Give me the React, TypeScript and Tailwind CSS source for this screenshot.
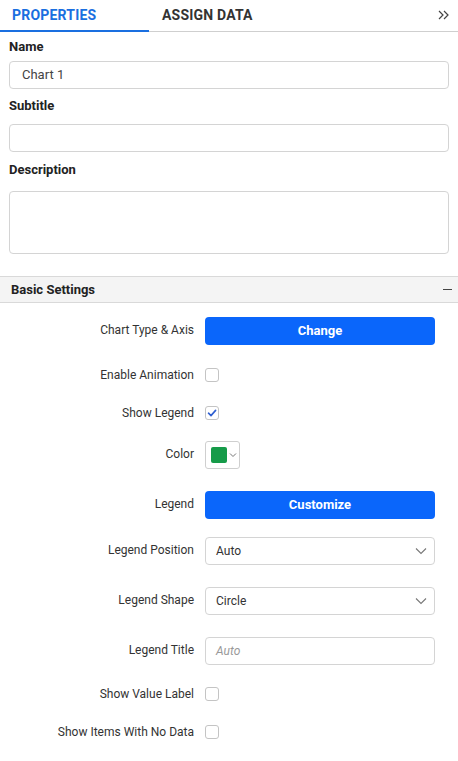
import React from "react"

const Check = ({ checked }: { checked?: boolean }) => (
  <div className="w-[14px] h-[14px] rounded-[3px] border border-[#c4c4c4] bg-white flex items-center justify-center">
    {checked && (
      <svg width="10" height="10" viewBox="0 0 10 10">
        <path d="M1.5 5.2 L4 7.6 L8.6 2.4" fill="none" stroke="#2f5fd0" strokeWidth="1.6" strokeLinecap="round" strokeLinejoin="round" />
      </svg>
    )}
  </div>
)

const Chevron = () => (
  <svg width="12" height="8" viewBox="0 0 12 8">
    <path d="M1 1.5 L6 6.5 L11 1.5" fill="none" stroke="#777" strokeWidth="1.1" />
  </svg>
)

const Row = ({ label, mt, lift, children }: { label: string; mt: string; lift?: boolean; children: React.ReactNode }) => (
  <div className={`flex items-center h-[28px] ${mt}`}>
    <div className={`w-[194px] text-right text-[12px] text-[#333] ${lift ? "pb-[3px]" : ""}`}>{label}</div>
    <div className="ml-[11px] w-[230px] flex items-center">{children}</div>
  </div>
)

const BlueButton = ({ text }: { text: string }) => (
  <button className="w-full h-[28px] rounded-[4px] bg-[#0a66fb] text-white text-[13px] font-bold flex items-center justify-center">
    {text}
  </button>
)

const Select = ({ value }: { value: string }) => (
  <div className="w-full h-[28px] rounded-[4px] border border-[#d4d4d4] flex items-center justify-between pl-[10px] pr-[7px] text-[12px] text-[#333]">
    <span>{value}</span>
    <Chevron />
  </div>
)

export default function App() {
  return (
    <div className="w-[458px] h-[761px] bg-white overflow-hidden" style={{ fontFamily: "Roboto, 'Liberation Sans', sans-serif" }}>
      {/* tabs */}
      <div className="h-[32px] border-b border-[#cfcfcf] flex items-end">
        <div className="w-[149px] h-[32px] border-b-2 border-[#1a6fe0] -mb-px flex items-center pl-[12px] text-[14px] font-bold text-[#1a6fe0] tracking-[0.2px]">
          PROPERTIES
        </div>
        <div className="h-[32px] flex items-center pl-[13px] text-[14px] font-bold text-[#333] tracking-[0.2px]">
          ASSIGN DATA
        </div>
        <div className="ml-auto h-[32px] flex items-center pr-[8px]">
          <svg width="12" height="10" viewBox="0 0 12 10">
            <path d="M1 1 L5 5 L1 9 M6 1 L10 5 L6 9" fill="none" stroke="#444" strokeWidth="1.2" />
          </svg>
        </div>
      </div>

      <div className="px-[9px]">
        <div className="mt-[7px] h-[16px] flex items-center text-[13px] font-bold text-[#222]">Name</div>
        <div className="mt-[6px] h-[28px] rounded-[4px] border border-[#d4d4d4] flex items-center pl-[12px] text-[13px] text-[#444]">
          Chart 1
        </div>
        <div className="mt-[9px] h-[16px] flex items-center text-[13px] font-bold text-[#222]">Subtitle</div>
        <div className="mt-[10px] h-[28px] rounded-[4px] border border-[#d4d4d4]"></div>
        <div className="mt-[10px] h-[16px] flex items-center text-[13px] font-bold text-[#222]">Description</div>
        <div className="mt-[13px] h-[63px] rounded-[4px] border border-[#d4d4d4]"></div>
      </div>

      {/* basic settings header */}
      <div className="mt-[22px] h-[27px] bg-[#f4f4f4] border-y border-[#d9d9d9] flex items-center justify-between pl-[11px] pr-[6px]">
        <span className="text-[13px] font-bold text-[#222]">Basic Settings</span>
        <span className="w-[9px] h-[1.5px] bg-[#444]"></span>
      </div>

      <Row label="Chart Type & Axis" mt="mt-[14px]" lift>
        <BlueButton text="Change" />
      </Row>
      <Row label="Enable Animation" mt="mt-[16px]">
        <Check />
      </Row>
      <Row label="Show Legend" mt="mt-[10px]">
        <Check checked />
      </Row>
      <Row label="Color" mt="mt-[14px]" lift>
        <div className="w-[35px] h-[28px] rounded-[3px] border border-[#cfcfcf] flex items-center pl-[5px]">
          <div className="w-[16px] h-[16px] rounded-[2px] bg-[#169b49]"></div>
          <svg width="8" height="6" viewBox="0 0 8 6" className="ml-[2px]">
            <path d="M1 1.5 L4 4.5 L7 1.5" fill="none" stroke="#777" strokeWidth="1" />
          </svg>
        </div>
      </Row>
      <Row label="Legend" mt="mt-[22px]" lift>
        <BlueButton text="Customize" />
      </Row>
      <Row label="Legend Position" mt="mt-[18px]" lift>
        <Select value="Auto" />
      </Row>
      <Row label="Legend Shape" mt="mt-[22px]" lift>
        <Select value="Circle" />
      </Row>
      <Row label="Legend Title" mt="mt-[22px]" lift>
        <div className="w-full h-[28px] rounded-[4px] border border-[#d4d4d4] flex items-center pl-[10px] text-[12px] italic text-[#999]">
          Auto
        </div>
      </Row>
      <Row label="Show Value Label" mt="mt-[15px]">
        <Check />
      </Row>
      <Row label="Show Items With No Data" mt="mt-[10px]">
        <Check />
      </Row>
    </div>
  )
}
